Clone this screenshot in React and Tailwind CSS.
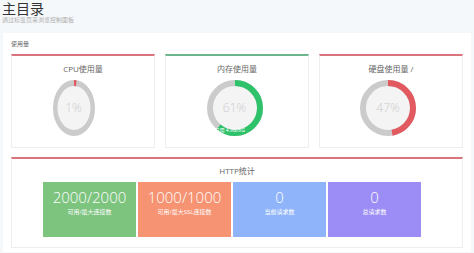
import React from 'react';

const cjk = '"Open Sans", "Noto Sans CJK SC", sans-serif';
const head = '"Liberation Sans", "Noto Sans CJK SC", sans-serif';

const gauges = [
  { title: 'CPU使用量', value: 1, arc: 2, color: '#e25a5f', border: 'border-t-[#d9747c]', squish: true, shift: 'pr-[19px]' },
  { title: '内存使用量', value: 61, arc: 61, color: '#2ec26b', border: 'border-t-[#6db58d]', note: '已用 4.9G/8G', shift: 'pr-[5px]' },
  { title: '硬盘使用量 /', value: 47, arc: 47, color: '#e25a5f', border: 'border-t-[#d9747c]', shift: 'pr-[6px]' },
];

const tiles = [
  { num: '2000/2000', label: '可用/最大连接数', bg: 'bg-[#7dc47f]' },
  { num: '1000/1000', label: '可用/最大SSL连接数', bg: 'bg-[#f69373]' },
  { num: '0', label: '当前请求数', bg: 'bg-[#8fb4fa]' },
  { num: '0', label: '总请求数', bg: 'bg-[#9b8df5]' },
];

function Ring({ g }) {
  const c = 2 * Math.PI * 25;
  const w = g.squish ? 42 : 56;
  return (
    <div className="relative h-[56px]" style={{ width: w }}>
      <svg width={w} height="56" viewBox="0 0 56 56" preserveAspectRatio="none">
        <circle cx="28" cy="28" r="25" fill="#f4f4f4" stroke="#cbcbcb" strokeWidth="6" />
        <circle
          cx="28" cy="28" r="25" fill="none" stroke={g.color} strokeWidth="6"
          strokeDasharray={`${(c * g.arc) / 100} ${c}`}
          transform="rotate(-90 28 28)"
        />
      </svg>
      <div className="absolute inset-0 flex items-center justify-center text-[12px] font-light text-[#cccccc]">
        {g.value}%
      </div>
      {g.note && (
        <div className="absolute left-[8px] bottom-[3px] text-[5px] leading-[6px] text-white whitespace-nowrap">
          {g.note}
        </div>
      )}
    </div>
  );
}

export default function App() {
  return (
    <div className="w-[474px] h-[253px] overflow-hidden bg-[#f5f8fa]" style={{ fontFamily: cjk }}>
      {/* 头部 */}
      <div className="px-[2px] pt-[1px]" style={{ fontFamily: head }}>
        <h1 className="text-[14px] leading-[16px] font-normal text-[#333]">主目录</h1>
        <p className="text-[6px] leading-[7px] text-[#b0b0b0]">通过标签页来浏览控制面板</p>
      </div>

      {/* 面板 */}
      <div className="mt-[9px] mx-[3px] bg-white px-[8px] pb-[4px]">
        <p className="pt-[7px] text-[6px] leading-[8px] text-[#666]">使用量</p>

        <div className="mt-[6px] grid grid-cols-3 gap-[10px]">
          {gauges.map((g) => (
            <div key={g.title} className={`h-[94px] border border-[#eeeeee] border-t-2 ${g.border} bg-white`}>
              <p className="pt-[8px] text-center text-[8px] leading-[10px] text-[#666]">{g.title}</p>
              <div className={`mt-[6px] flex justify-center ${g.shift}`}>
                <Ring g={g} />
              </div>
            </div>
          ))}
        </div>

        {/* HTTP统计 */}
        <div className="mt-[9px] h-[91px] border border-[#eeeeee] border-t-2 border-t-[#d9747c]">
          <p className="pt-[7px] text-center text-[8px] leading-[10px] text-[#666]">HTTP统计</p>
          <div className="mt-[6px] flex gap-[2px] pl-[31px]">
            {tiles.map((t) => (
              <div key={t.label} className={`w-[93px] h-[55px] ${t.bg} flex flex-col items-center pt-[5px] text-white`}>
                <span className="text-[15px] leading-[20px] font-light">{t.num}</span>
                <span className="mt-[2px] text-[6px] leading-[7px]">{t.label}</span>
              </div>
            ))}
          </div>
        </div>
      </div>
    </div>
  );
}
